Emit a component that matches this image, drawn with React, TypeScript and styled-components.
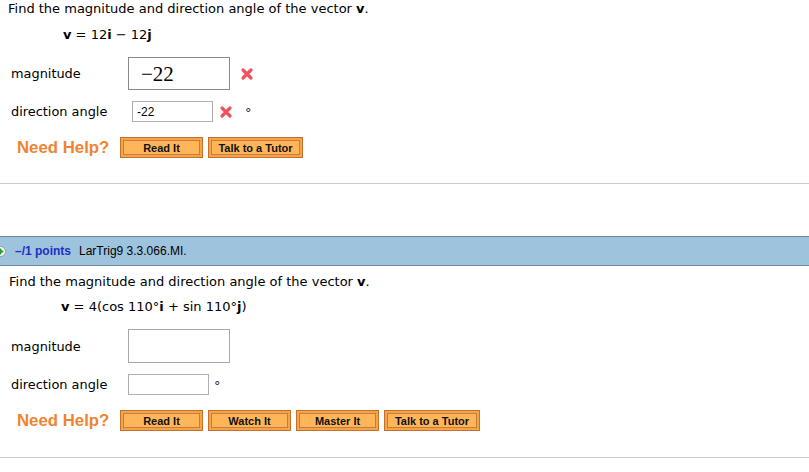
import React from 'react'
import styled, { createGlobalStyle } from 'styled-components'

const GlobalStyle = createGlobalStyle`
  html, body {
    margin: 0;
    padding: 0;
    background: #ffffff;
  }
  body {
    font-family: "DejaVu Sans", Verdana, sans-serif;
    color: #000;
  }
`

const Page = styled.div`
  width: 809px;
  height: 472px;
  overflow: hidden;
  background: #fff;
`

const QuestionBlock = styled.div<{ $top: number }>`
  padding-top: ${p => p.$top}px;
`

const Prompt = styled.div<{ $left: number }>`
  height: 18px;
  line-height: 18px;
  padding-left: ${p => p.$left}px;
  font-size: 13px;
  white-space: nowrap;
`

const Formula = styled.div<{ $left: number; $gap: number }>`
  margin-top: ${p => p.$gap}px;
  height: 16px;
  line-height: 16px;
  padding-left: ${p => p.$left}px;
  font-size: 13px;
  white-space: nowrap;

  b {
    font-weight: bold;
  }
`

const AnswerRow = styled.div<{ $gap: number; $height: number }>`
  margin-top: ${p => p.$gap}px;
  height: ${p => p.$height}px;
  display: flex;
  align-items: center;
`

const Label = styled.div`
  width: 117px;
  padding-left: 11px;
  font-size: 12.9px;
  white-space: nowrap;
`

const BigInput = styled.div<{ $border: string }>`
  box-sizing: border-box;
  width: 102px;
  height: 100%;
  border: 1px solid ${p => p.$border};
  padding-left: 12px;
  font-family: "Liberation Serif", "Times New Roman", serif;
  font-size: 21px;
  line-height: 26px;
  display: flex;
  align-items: center;
`

const SmallInput = styled.div<{ $shift: number }>`
  box-sizing: border-box;
  width: 81px;
  height: 100%;
  margin-left: ${p => p.$shift}px;
  border: 1px solid #b0b0b0;
  padding-left: 4px;
  font-family: "Liberation Sans", Arial, sans-serif;
  font-size: 12px;
  display: flex;
  align-items: center;
`

const Mark = styled.span<{ $gap: number }>`
  display: inline-flex;
  margin-left: ${p => p.$gap}px;
`

const Degree = styled.span<{ $gap: number }>`
  margin-left: ${p => p.$gap}px;
  font-size: 13px;
  color: #1b2a40;
  position: relative;
  top: 1px;
`

const HelpRow = styled.div<{ $gap: number }>`
  margin-top: ${p => p.$gap}px;
  height: 21px;
  display: flex;
  align-items: center;
`

const HelpTitle = styled.span`
  width: 103px;
  padding-left: 17px;
  font-family: "Liberation Sans", Arial, sans-serif;
  font-weight: bold;
  font-size: 16.8px;
  color: #f08430;
  white-space: nowrap;
`

const HelpButton = styled.div<{ $width: number }>`
  box-sizing: border-box;
  width: ${p => p.$width}px;
  height: 21px;
  margin-right: 5px;
  padding: 2px;
  border: 1px solid #c3712f;
  background: #f7a246;
  display: flex;
`

const HelpButtonFace = styled.div`
  flex: 1;
  border: 1px solid #c67c3e;
  background: #ffb659;
  display: flex;
  align-items: center;
  justify-content: center;
  font-family: "Liberation Sans", Arial, sans-serif;
  font-weight: bold;
  font-size: 11px;
  color: #111;
  white-space: nowrap;
`

const Divider = styled.div<{ $gap: number }>`
  margin-top: ${p => p.$gap}px;
  height: 1px;
  background: #cccccc;
`

const PointsBar = styled.div`
  margin-top: 52px;
  box-sizing: border-box;
  height: 30px;
  border-top: 1px solid #6f8899;
  border-bottom: 1px solid #6f8899;
  background: #9dc3dd;
  display: flex;
  align-items: center;
  font-family: "Liberation Sans", Arial, sans-serif;
  font-size: 12px;
  white-space: nowrap;
`

const ExpandIcon = styled.span`
  display: inline-flex;
  margin-left: -5px;
  margin-right: 9px;
`

const Points = styled.span`
  color: #1f2fc4;
  font-weight: bold;
  margin-right: 8px;
`

const CrossMark = () => (
  <svg width="14" height="14" viewBox="0 0 14 14">
    <path d="M3 3 L11 11 M11 3 L3 11" stroke="#f0525d" strokeWidth="3.2" strokeLinecap="round" />
  </svg>
)

const PlusIcon = () => (
  <svg width="11" height="11" viewBox="0 0 11 11">
    <circle cx="5.5" cy="5.5" r="5" fill="#ffffff" stroke="#8c9aa4" strokeWidth="1" />
    <path d="M5.5 2.6 V8.4 M2.6 5.5 H8.4" stroke="#1e9a3a" strokeWidth="1.8" />
  </svg>
)

const HelpButtons = ({ labels }: { labels: { text: string; width: number }[] }) => (
  <>
    {labels.map(b => (
      <HelpButton key={b.text} $width={b.width}>
        <HelpButtonFace>{b.text}</HelpButtonFace>
      </HelpButton>
    ))}
  </>
)

export default function App() {
  return (
    <Page>
      <GlobalStyle />
      <QuestionBlock $top={0}>
        <Prompt $left={8}>
          Find the magnitude and direction angle of the vector <b>v</b>.
        </Prompt>
        <Formula $left={63} $gap={9}>
          <b>v</b> = 12<b>i</b> − 12<b>j</b>
        </Formula>
        <AnswerRow $gap={14} $height={33}>
          <Label>magnitude</Label>
          <BigInput $border="#8a8a8a">−22</BigInput>
          <Mark $gap={10}>
            <CrossMark />
          </Mark>
        </AnswerRow>
        <AnswerRow $gap={11} $height={21}>
          <Label>direction angle</Label>
          <SmallInput $shift={4}>-22</SmallInput>
          <Mark $gap={6}>
            <CrossMark />
          </Mark>
          <Degree $gap={12}>°</Degree>
        </AnswerRow>
        <HelpRow $gap={15}>
          <HelpTitle>Need Help?</HelpTitle>
          <HelpButtons
            labels={[
              { text: 'Read It', width: 83 },
              { text: 'Talk to a Tutor', width: 95 },
            ]}
          />
        </HelpRow>
        <Divider $gap={25} />
      </QuestionBlock>

      <PointsBar>
        <ExpandIcon>
          <PlusIcon />
        </ExpandIcon>
        <Points>–/1 points</Points>
        LarTrig9 3.3.066.MI.
      </PointsBar>

      <QuestionBlock $top={7}>
        <Prompt $left={9}>
          Find the magnitude and direction angle of the vector <b>v</b>.
        </Prompt>
        <Formula $left={61} $gap={8}>
          <b>v</b> = 4(cos 110°<b>i</b> + sin 110°<b>j</b>)
        </Formula>
        <AnswerRow $gap={14} $height={34}>
          <Label>magnitude</Label>
          <BigInput $border="#a8a8a8" />
        </AnswerRow>
        <AnswerRow $gap={11} $height={21}>
          <Label>direction angle</Label>
          <SmallInput $shift={0} />
          <Degree $gap={5}>°</Degree>
        </AnswerRow>
        <HelpRow $gap={15}>
          <HelpTitle>Need Help?</HelpTitle>
          <HelpButtons
            labels={[
              { text: 'Read It', width: 83 },
              { text: 'Watch It', width: 83 },
              { text: 'Master It', width: 83 },
              { text: 'Talk to a Tutor', width: 96 },
            ]}
          />
        </HelpRow>
        <Divider $gap={26} />
      </QuestionBlock>
    </Page>
  )
}
